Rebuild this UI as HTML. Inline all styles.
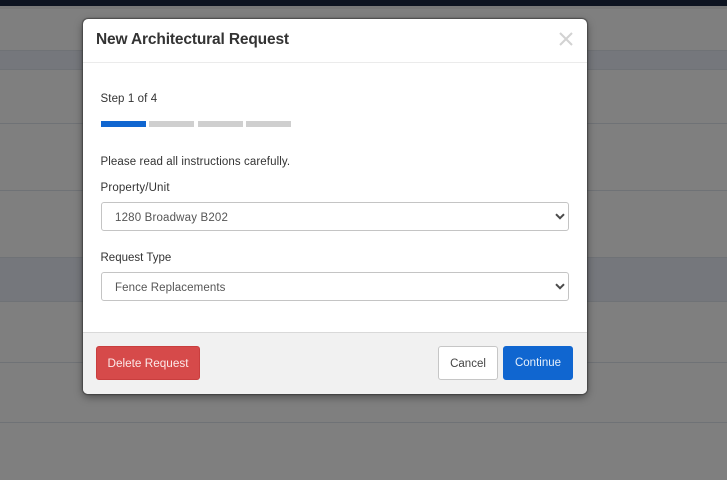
<!DOCTYPE html>
<html>
<head>
<meta charset="utf-8">
<style>
html,body{margin:0;padding:0;background:#7f7f7f;}
body{width:727px;height:480px;position:relative;overflow:hidden;background:#7f7f7f;font-family:"Liberation Sans",sans-serif;color:#2f2f2f;}
.a{position:absolute;}
.line{position:absolute;left:0;width:727px;height:1px;background:#6f7276;}
.t{position:absolute;white-space:nowrap;line-height:16px;}
.sel{position:absolute;left:101px;width:466px;height:27px;border:1px solid #c4c4c4;border-radius:3px;background:#fff;}
.btn{position:absolute;box-sizing:border-box;border-radius:3px;text-align:center;font-size:11.5px;}
</style>
</head>
<body>
<div class="a" style="left:0;top:0;width:727px;height:6px;background:#0d1320;"></div>
<div class="a" style="left:0;top:6px;width:727px;height:3px;background:#787878;"></div>
<div class="a" style="left:0;top:51px;width:727px;height:18px;background:#75777c;"></div>
<div class="a" style="left:0;top:258px;width:727px;height:43px;background:#75777c;"></div>
<div class="line" style="top:50px;"></div>
<div class="line" style="top:69px;"></div>
<div class="line" style="top:123px;"></div>
<div class="line" style="top:190px;"></div>
<div class="line" style="top:257px;"></div>
<div class="line" style="top:301px;"></div>
<div class="line" style="top:362px;"></div>
<div class="line" style="top:422px;"></div>

<div class="a" style="left:83px;top:19px;width:504px;height:375px;background:#fff;border-radius:5px;box-shadow:0 0 1px 1px rgba(50,50,50,.65),0 3px 9px rgba(0,0,0,.4);overflow:hidden;">
  <div class="a" style="left:0;top:43px;width:504px;height:1px;background:#ebebeb;"></div>
  <div class="a" style="left:0;top:313px;width:504px;height:62px;background:#f1f1f1;border-top:1px solid #d9d9d9;"></div>
</div>

<div class="t" style="left:96px;top:32px;font-size:15.5px;line-height:16px;font-weight:bold;color:#333;letter-spacing:-.15px;">New Architectural Request</div>
<svg class="a" style="left:559px;top:32px;" width="14" height="14" viewBox="0 0 14 14"><path d="M1 1L13 13M13 1L1 13" stroke="#d2d2d2" stroke-width="2" fill="none"/></svg>

<div class="t" style="left:100.5px;top:91px;font-size:11.5px;color:#333;letter-spacing:.1px;">Step 1 of 4</div>
<div class="a" style="left:101px;top:121px;width:45px;height:6px;background:#1066d0;"></div>
<div class="a" style="left:149px;top:121px;width:45px;height:6px;background:#cfcfcf;"></div>
<div class="a" style="left:198px;top:121px;width:45px;height:6px;background:#cfcfcf;"></div>
<div class="a" style="left:246px;top:121px;width:45px;height:6px;background:#cfcfcf;"></div>

<div class="t" style="left:100.5px;top:154px;font-size:11.5px;color:#333;letter-spacing:.1px;">Please read all instructions carefully.</div>
<div class="t" style="left:100.5px;top:180px;font-size:11.5px;color:#333;letter-spacing:.16px;">Property/Unit</div>
<div class="sel" style="top:202px;"></div>
<div class="t" style="left:115px;top:210px;font-size:11.5px;color:#555;letter-spacing:.17px;">1280 Broadway B202</div>
<svg class="a" style="left:555px;top:213px;" width="10" height="7" viewBox="0 0 10 7"><path d="M1 1.2L5 5.2L9 1.2" stroke="#4a4a4a" stroke-width="2" fill="none"/></svg>

<div class="t" style="left:100.5px;top:250px;font-size:11.5px;color:#333;">Request Type</div>
<div class="sel" style="top:272px;"></div>
<div class="t" style="left:115px;top:280px;font-size:11.5px;color:#555;letter-spacing:.1px;">Fence Replacements</div>
<svg class="a" style="left:555px;top:283px;" width="10" height="7" viewBox="0 0 10 7"><path d="M1 1.2L5 5.2L9 1.2" stroke="#4a4a4a" stroke-width="2" fill="none"/></svg>

<div class="btn" style="left:96px;top:346px;width:104px;height:34px;background:#d64a4a;border:1px solid #c93e3e;color:#fbe9e9;line-height:34px;font-size:11.75px;">Delete Request</div>
<div class="btn" style="left:438px;top:346px;width:60px;height:34px;background:#fff;border:1px solid #c6c6c6;color:#444;line-height:35px;">Cancel</div>
<div class="btn" style="left:503px;top:346px;width:70px;height:34px;background:#1066d0;border:1px solid #1066d0;color:#e6effa;line-height:32px;">Continue</div>
</body>
</html>
